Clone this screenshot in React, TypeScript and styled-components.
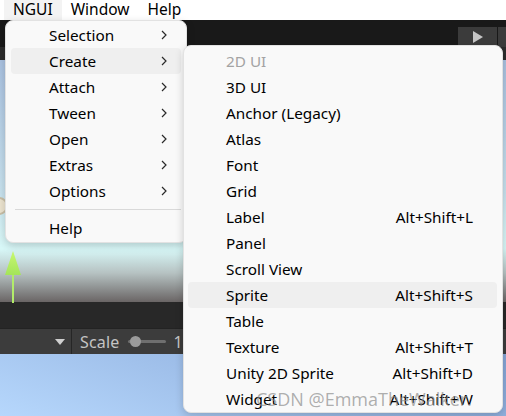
import React from "react";
import styled, { createGlobalStyle } from "styled-components";

const GlobalStyle = createGlobalStyle`
  html, body {
    margin: 0;
    padding: 0;
  }
  body {
    width: 506px;
    height: 416px;
    overflow: hidden;
    font-family: "Noto Sans", "Open Sans", sans-serif;
    -webkit-font-smoothing: antialiased;
  }
`;

const Page = styled.div`
  position: relative;
  width: 506px;
  height: 416px;
  display: flex;
  flex-direction: column;
  overflow: hidden;
  background: #191919;
`;

const MenuBar = styled.div`
  height: 20px;
  display: flex;
  align-items: stretch;
  padding-left: 4px;
  background: #ffffff;
`;

const BarItem = styled.div<{ $active?: boolean }>`
  padding: 0 9px;
  font-size: 15.5px;
  line-height: 19px;
  color: #000;
  background: ${(p) => (p.$active ? "#f3f3f3" : "transparent")};
`;

const TopToolbar = styled.div`
  height: 27px;
  display: flex;
  justify-content: flex-end;
  align-items: flex-end;
  gap: 1px;
  background: #191919;
`;

const ToolButton = styled.div<{ $w: number }>`
  width: ${(p) => p.$w}px;
  height: 20px;
  display: flex;
  align-items: center;
  justify-content: center;
  background: #3b3b3b;
`;

const SceneTabs = styled.div`
  height: 13px;
  background: #2c2c2c;
`;

const Scene = styled.div`
  position: relative;
  height: 242px;
  background: linear-gradient(
    to bottom,
    #a9c1e0 0%,
    #c8e2ee 55%,
    #d6f4f6 72%,
    #d8f8f8 78%,
    #b6c2c2 88%,
    #6a6565 100%
  );
`;

const Gizmo = styled.svg`
  position: absolute;
  left: 4px;
  top: 191px;
`;

const Ring = styled.div`
  position: absolute;
  left: -10px;
  top: 137px;
  width: 14px;
  height: 14px;
  border-radius: 50%;
  border: 2px solid #c9bfa6;
  background: #ece4cf;
`;

const DarkStrip = styled.div`
  height: 26px;
  background: #282828;
`;

const SceneToolbar = styled.div`
  height: 25px;
  display: flex;
  align-items: center;
  background: #3c3c3c;
  border-top: 1px solid #232323;
  color: #c4c4c4;
`;

const DropSlot = styled.div`
  width: 72px;
  height: 100%;
  display: flex;
  align-items: center;
  justify-content: flex-end;
  padding-right: 6px;
  box-sizing: border-box;
  border-right: 1px solid #262626;
`;

const ToolLabel = styled.span`
  font-size: 16px;
  line-height: 20px;
  margin-left: 8px;
  letter-spacing: 0.2px;
`;

const Slider = styled.div`
  position: relative;
  width: 38px;
  height: 3px;
  margin-left: 8px;
  background: #6f6f6f;
  border-radius: 2px;
`;

const Thumb = styled.div`
  position: absolute;
  left: 2px;
  top: -4px;
  width: 11px;
  height: 11px;
  border-radius: 50%;
  background: #9b9b9b;
`;

const Sky = styled.div`
  flex: 1;
  background: linear-gradient(200deg, #84a3d4 0%, #9dbde8 50%, #b6d7fc 100%);
`;

const Menu = styled.div<{ $left: number; $top: number; $width: number }>`
  position: absolute;
  left: ${(p) => p.$left}px;
  top: ${(p) => p.$top}px;
  width: ${(p) => p.$width}px;
  box-sizing: border-box;
  background: #f9f9f9;
  border: 1px solid #e2e2e2;
  border-radius: 8px;
  box-shadow: 0 3px 9px rgba(0, 0, 0, 0.18);
  font-size: 15.3px;
  color: #000;
`;

const MainMenu = styled(Menu)`
  padding: 1px 5px;
  z-index: 1;
`;

const SubMenu = styled(Menu)`
  padding: 2px 5px 0 4px;
  z-index: 2;
`;

const Row = styled.div<{ $hover?: boolean; $disabled?: boolean }>`
  height: 26px;
  display: flex;
  align-items: center;
  justify-content: space-between;
  padding: 0 14px 0 38px;
  border-radius: 4px;
  line-height: 26px;
  background: ${(p) => (p.$hover ? "#efefef" : "transparent")};
  color: ${(p) => (p.$disabled ? "#a3a3a3" : "#000")};
`;

const SubRow = styled(Row)`
  padding-right: 24px;
`;

const Separator = styled.div`
  height: 1px;
  margin: 5px 0 5px 4px;
  background: #d9d9d9;
`;

const Watermark = styled.div`
  position: absolute;
  left: 256px;
  top: 387px;
  z-index: 3;
  font-family: "Open Sans", "Noto Sans", sans-serif;
  font-size: 18px;
  line-height: 24px;
  color: rgba(140, 140, 140, 0.7);
  white-space: nowrap;
`;

const Chevron = () => (
  <svg width="6" height="10" viewBox="0 0 6 10">
    <polyline points="1,1 5,5 1,9" fill="none" stroke="#2a2a2a" strokeWidth="1.2" />
  </svg>
);

const mainItems = ["Selection", "Create", "Attach", "Tween", "Open", "Extras", "Options"];

const subItems: { label: string; shortcut?: string; disabled?: boolean }[] = [
  { label: "2D UI", disabled: true },
  { label: "3D UI" },
  { label: "Anchor (Legacy)" },
  { label: "Atlas" },
  { label: "Font" },
  { label: "Grid" },
  { label: "Label", shortcut: "Alt+Shift+L" },
  { label: "Panel" },
  { label: "Scroll View" },
  { label: "Sprite", shortcut: "Alt+Shift+S" },
  { label: "Table" },
  { label: "Texture", shortcut: "Alt+Shift+T" },
  { label: "Unity 2D Sprite", shortcut: "Alt+Shift+D" },
  { label: "Widget", shortcut: "Alt+Shift+W" },
];

export default function App() {
  return (
    <>
      <GlobalStyle />
      <Page>
        <MenuBar>
          <BarItem $active>NGUI</BarItem>
          <BarItem>Window</BarItem>
          <BarItem>Help</BarItem>
        </MenuBar>

        <TopToolbar>
          <ToolButton $w={39}>
            <svg width="10" height="12" viewBox="0 0 10 12">
              <polygon points="0,0 10,6 0,12" fill="#c6c6c6" />
            </svg>
          </ToolButton>
          <ToolButton $w={8} />
        </TopToolbar>
        <SceneTabs />

        <Scene>
          <Ring />
          <Gizmo width="18" height="52" viewBox="0 0 18 52">
            <defs>
              <linearGradient id="head" x1="0" y1="0" x2="0" y2="1">
                <stop offset="0" stopColor="#c8f870" />
                <stop offset="1" stopColor="#a4e45a" />
              </linearGradient>
            </defs>
            <rect x="8" y="20" width="2" height="32" fill="#b2ec6a" />
            <polygon points="9,0 17,24 1,24" fill="url(#head)" />
          </Gizmo>
        </Scene>

        <DarkStrip />

        <SceneToolbar>
          <DropSlot>
            <svg width="10" height="6" viewBox="0 0 10 6">
              <polygon points="0,0 10,0 5,6" fill="#cfcfcf" />
            </svg>
          </DropSlot>
          <ToolLabel>Scale</ToolLabel>
          <Slider>
            <Thumb />
          </Slider>
          <ToolLabel>1</ToolLabel>
        </SceneToolbar>

        <Sky />

        <MainMenu $left={5} $top={20} $width={182}>
          {mainItems.map((item) => (
            <Row key={item} $hover={item === "Create"}>
              <span>{item}</span>
              <Chevron />
            </Row>
          ))}
          <Separator />
          <Row>
            <span>Help</span>
          </Row>
        </MainMenu>

        <SubMenu $left={183} $top={45} $width={320}>
          {subItems.map((item) => (
            <SubRow key={item.label} $hover={item.label === "Sprite"} $disabled={item.disabled}>
              <span>{item.label}</span>
              {item.shortcut && <span>{item.shortcut}</span>}
            </SubRow>
          ))}
        </SubMenu>

        <Watermark>CSDN @EmmaTheWalker.</Watermark>
      </Page>
    </>
  );
}
